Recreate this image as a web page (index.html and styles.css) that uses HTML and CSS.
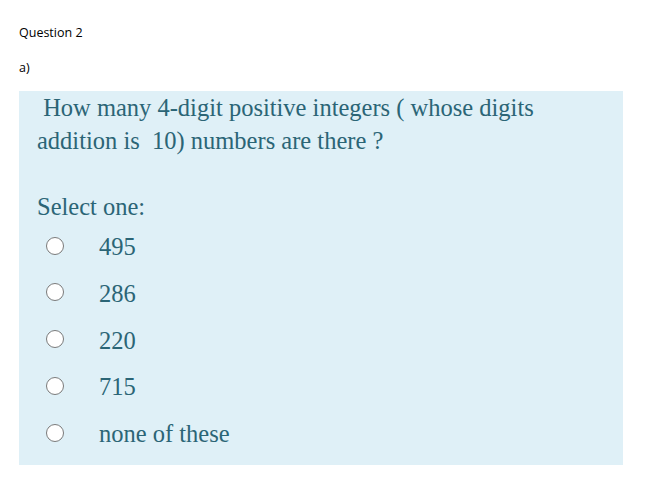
FILE: index.html
```html
<!DOCTYPE html>
<html lang="en">
<head>
  <meta charset="UTF-8">
  <title>Question 2</title>
  <link rel="stylesheet" href="styles.css">
</head>
<body>

  <div class="question">
    <p class="q-title">Question 2</p>
    <p class="q-part">a)</p>

    <div class="formulation">
      <p class="qtext">&nbsp;How many 4-digit positive integers ( whose digits<br>addition is &nbsp;10) numbers are there ?</p>

      <div class="prompt">Select one:</div>
      <div class="answers">
        <label class="answer"><input type="radio" name="q2"> <span>495</span></label>
        <label class="answer"><input type="radio" name="q2"> <span>286</span></label>
        <label class="answer"><input type="radio" name="q2"> <span>220</span></label>
        <label class="answer"><input type="radio" name="q2"> <span>715</span></label>
        <label class="answer"><input type="radio" name="q2"> <span>none of these</span></label>
      </div>
    </div>
  </div>

</body>
</html>
```

FILE: styles.css
```css
body {
  margin: 0;
  background-color: #ffffff;
}
.question {
  padding: 24px 0 0 19px;
  width: 604px;
}
.q-title,
.q-part {
  font-family: "Open Sans", "Liberation Sans", sans-serif;
  font-size: 12.5px;
  color: #000;
  margin: 0;
  line-height: 17px;
}
.q-part {
  margin-top: 18px;
}
.formulation {
  margin-top: 15px;
  background-color: #dff0f7;
  padding: 0 18px 8px 18px;
  font-family: "Liberation Serif", "DejaVu Serif", serif;
  font-size: 24.5px;
  line-height: 33px;
  color: #2b6576;
}
.qtext {
  margin: 0 0 33px 0;
}
.answers {
  display: flex;
  flex-direction: column;
}
.answer {
  display: flex;
  align-items: center;
  padding: 7px 0 6.75px 0;
  cursor: pointer;
}
.answer input {
  appearance: none;
  -webkit-appearance: none;
  width: 18px;
  height: 18px;
  margin: 0 35px 0 9px;
  border: 1.5px solid #7a7a7a;
  border-radius: 50%;
  background-color: #fff;
  box-sizing: border-box;
  position: relative;
  top: -1px;
}
.answer input:checked {
  background: radial-gradient(circle, #2b6576 0 4px, #fff 5px);
}
```
